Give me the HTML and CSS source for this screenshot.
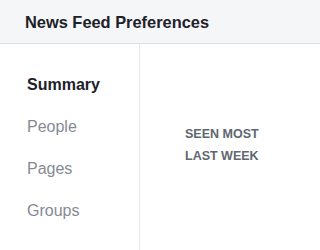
FILE: index.html
```html
<!DOCTYPE html>
<html>
<head>
<meta charset="utf-8">
<link rel="stylesheet" href="styles.css">
</head>
<body>
<div class="header">News Feed Preferences</div>
<div class="body">
  <nav class="sidebar">
    <div class="item active">Summary</div>
    <div class="item">People</div>
    <div class="item">Pages</div>
    <div class="item">Groups</div>
  </nav>
  <div class="main">
    <div class="label">SEEN MOST<br>LAST WEEK</div>
  </div>
</div>
</body>
</html>
```
FILE: styles.css
```css
html, body {
  margin: 0;
  padding: 0;
  background: #ffffff;
  font-family: "Liberation Sans", Arial, sans-serif;
}
.header {
  height: 41px;
  padding-top: 2px;
  padding-left: 25px;
  line-height: 41px;
  font-size: 16.4px;
  font-weight: bold;
  color: #1d2129;
  background: #f5f6f7;
  border-bottom: 1px solid #dddfe2;
}
.body {
  display: flex;
  height: 206px;
}
.sidebar {
  width: 140px;
  box-sizing: border-box;
  border-right: 1px solid #e9ebee;
  padding-top: 20px;
  padding-left: 27px;
}
.item {
  height: 42px;
  line-height: 42px;
  font-size: 16px;
  color: #858a94;
}
.item.active {
  color: #1d2129;
  font-weight: bold;
}
.main {
  flex: 1;
  padding-top: 79px;
  padding-left: 45px;
}
.label {
  font-size: 12.5px;
  line-height: 22px;
  font-weight: bold;
  color: #606770;
}
```
